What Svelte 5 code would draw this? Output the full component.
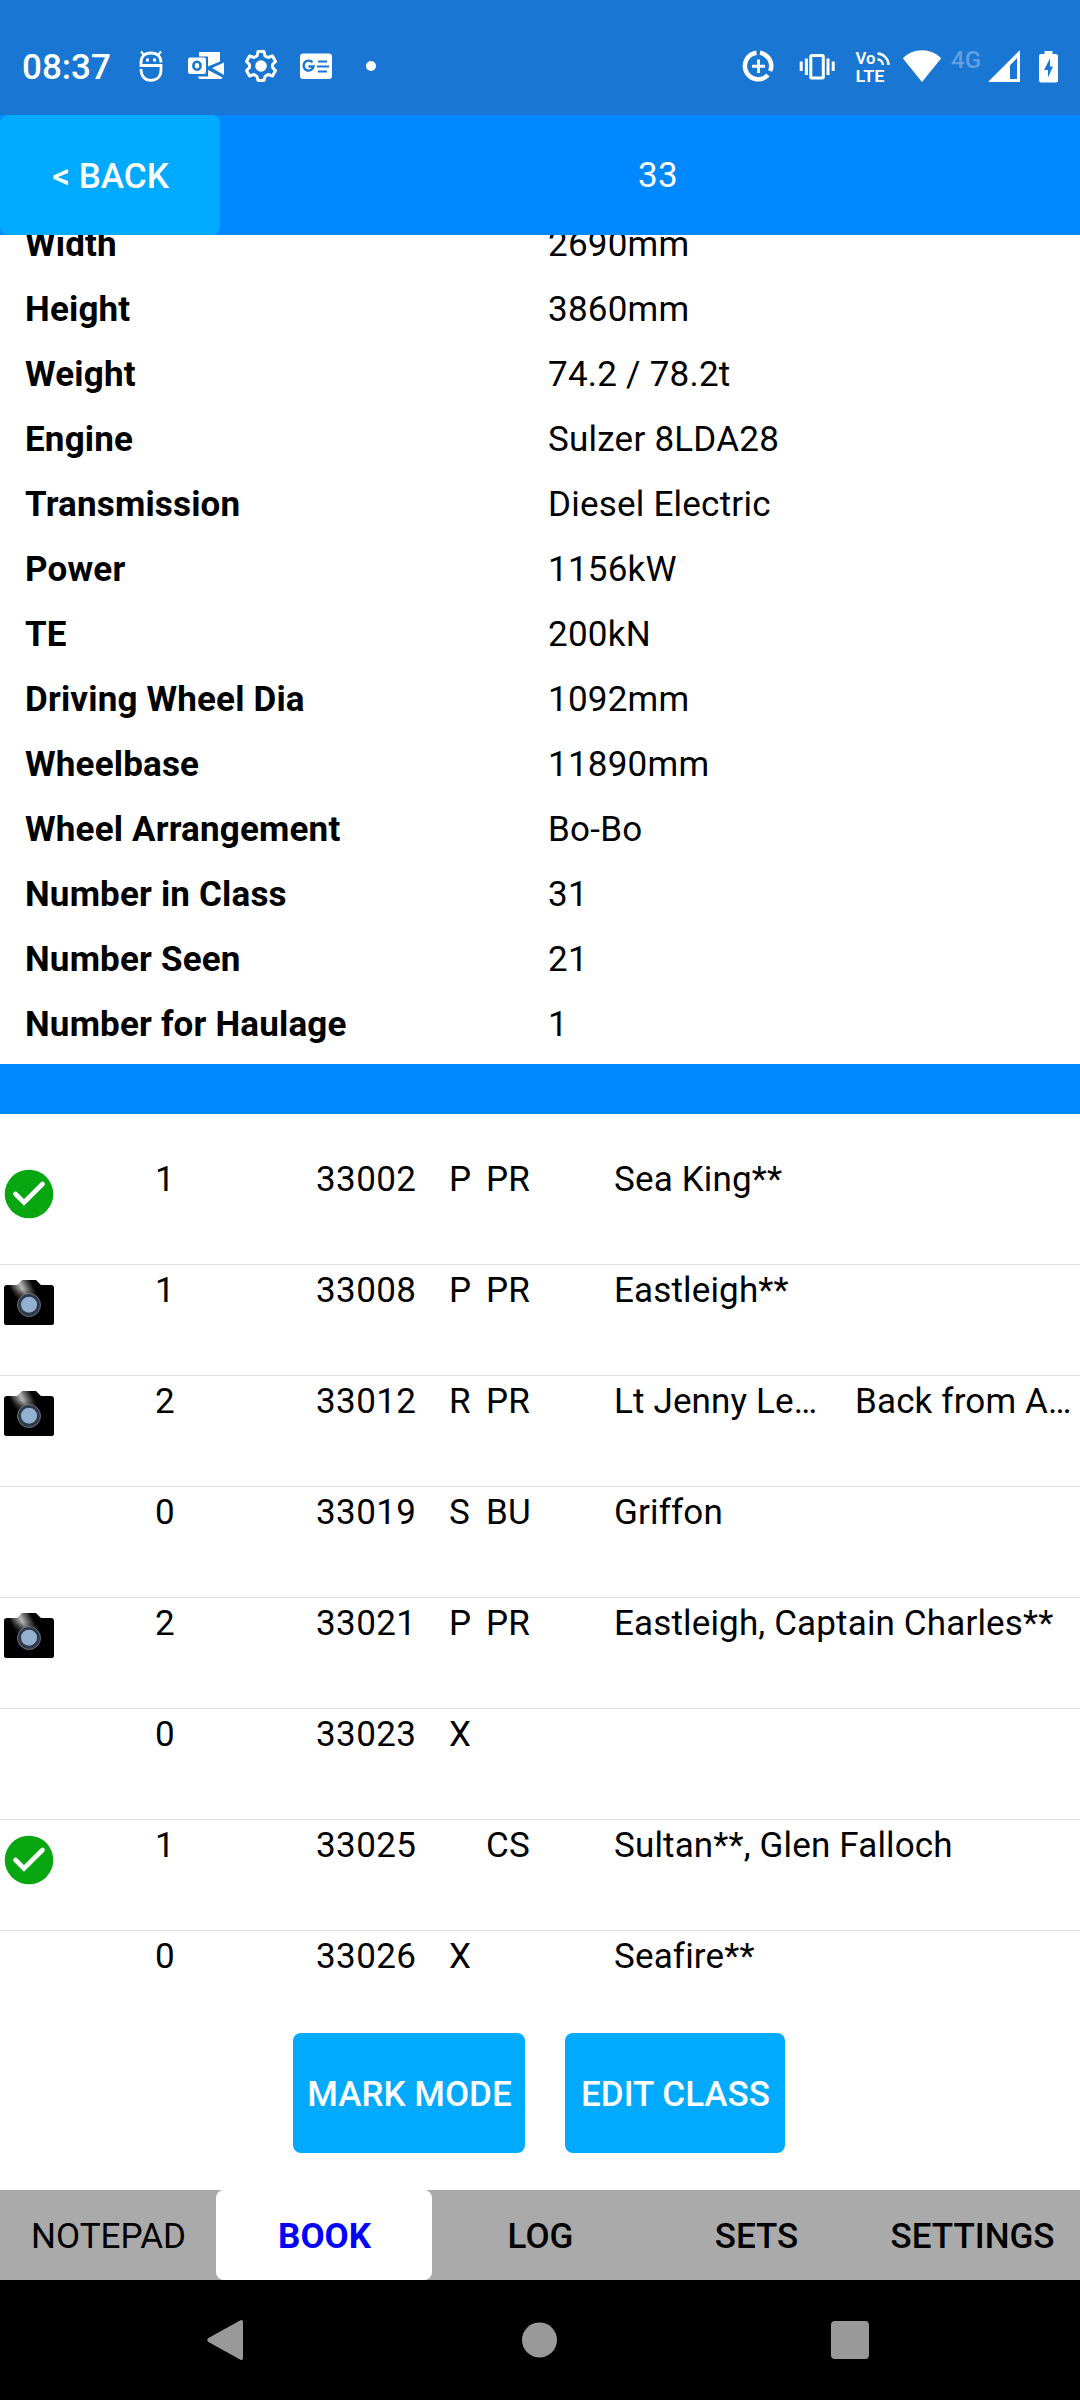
<script lang="ts">
  type Loco = {
    icon?: 'tick' | 'camera';
    count: number;
    number: string;
    status?: string;
    pool?: string;
    name?: string;
    note?: string;
  };

  const details: [string, string][] = [
    ['Width', '2690mm'],
    ['Height', '3860mm'],
    ['Weight', '74.2 / 78.2t'],
    ['Engine', 'Sulzer 8LDA28'],
    ['Transmission', 'Diesel Electric'],
    ['Power', '1156kW'],
    ['TE', '200kN'],
    ['Driving Wheel Dia', '1092mm'],
    ['Wheelbase', '11890mm'],
    ['Wheel Arrangement', 'Bo-Bo'],
    ['Number in Class', '31'],
    ['Number Seen', '21'],
    ['Number for Haulage', '1']
  ];

  const locos: Loco[] = [
    { icon: 'tick', count: 1, number: '33002', status: 'P', pool: 'PR', name: 'Sea King**' },
    { icon: 'camera', count: 1, number: '33008', status: 'P', pool: 'PR', name: 'Eastleigh**' },
    { icon: 'camera', count: 2, number: '33012', status: 'R', pool: 'PR', name: 'Lt Jenny Le…', note: 'Back from A…' },
    { count: 0, number: '33019', status: 'S', pool: 'BU', name: 'Griffon' },
    { icon: 'camera', count: 2, number: '33021', status: 'P', pool: 'PR', name: 'Eastleigh, Captain Charles**' },
    { count: 0, number: '33023', status: 'X' },
    { icon: 'tick', count: 1, number: '33025', pool: 'CS', name: 'Sultan**, Glen Falloch' },
    { count: 0, number: '33026', status: 'X', name: 'Seafire**' }
  ];

  const tabs = ['NOTEPAD', 'BOOK', 'LOG', 'SETS', 'SETTINGS'];
  let activeTab = $state('BOOK');
</script>

<div class="screen">
  <div class="status-bar">
    <span class="time">08:37</span>
    <div class="notifications">
      <svg width="36" height="36" viewBox="0 0 36 36" fill="none" stroke="#fff" stroke-width="2.800">
        <path d="M28 14.500C28 8.500 24 5 18 5S8 8.500 8 14.500V17.500H28V22C28 28.500 24 32.300 18 32.300S8 28.500 8 21" />
        <path d="M8 3.500l3 3.500M28 3.500l-3 3.500" stroke-width="2.200" />
        <path d="M13 12h3M20 12h3" />
      </svg>
      <svg width="36" height="36" viewBox="0 0 36 36">
        <path fill="#fff" d="M11 4H32V13.500L20 18.500V8.500H11zM36 14.500V27L24 20zM20 22L34.500 29.500Q34 31 32 31H12Q10.500 31 10 28.500H20z" />
        <path fill="#fff" fill-rule="evenodd" d="M2 9.500H16Q18 9.500 18 11.500V24Q18 26 16 26H2Q0 26 0 24V11.500Q0 9.500 2 9.500zM9 12.500C2.500 12.500 2.500 23 9 23S15.500 12.500 9 12.500zM9 15C12 15 12 20.500 9 20.500S6 15 9 15z" />
      </svg>
      <svg width="36" height="36" viewBox="0 0 36 36">
        <path fill="none" stroke="#fff" stroke-width="3" stroke-linejoin="round" d="M15 3.500H21L22 8L25 9.500L29.500 8L32.500 13.500L29.500 16.500V19.500L32.500 22.500L29.500 28L25 26.500L22 28.500L21 32.500H15L14 28.500L11 26.500L6.500 28L3.500 22.500L6.500 19.500V16.500L3.500 13.500L6.500 8L11 9.500L14 8z" />
        <circle cx="18" cy="18" r="5.800" fill="#fff" />
      </svg>
      <svg width="36" height="36" viewBox="0 0 36 36" fill="none" stroke="#1976d2">
        <rect x="2" y="5.500" width="32" height="25.500" rx="3" fill="#fff" stroke="none" />
        <path stroke-width="2.400" d="M14.500 14.500A5 5 0 1 0 15.500 18.500H10.500" />
        <path stroke-width="2" d="M20 13.500H29M19 18.500H31M20 23.500H29" />
      </svg>
      <svg width="36" height="36" viewBox="0 0 36 36">
        <circle cx="18" cy="18" r="5" fill="#fff" />
      </svg>
    </div>
    <div class="system">
      <svg width="36" height="36" viewBox="0 0 36 36" fill="none" stroke="#fff">
        <path stroke-width="4.500" d="M20 4.800A13.300 13.300 0 0 1 30.200 23M28 27A13.300 13.300 0 1 1 16.500 4.800" />
        <path stroke-width="3" d="M18.500 11.500V25M12 18.200H25" />
      </svg>
      <svg class="vibrate" width="36" height="36" viewBox="0 0 36 36" fill="none" stroke="#fff">
        <rect x="11.800" y="7.500" width="12.500" height="22.500" rx="1" stroke-width="3" />
        <path stroke-width="3" d="M2.200 13.500V23M7.400 10.500V27M29 10.500V27M34.200 13.500V23" />
      </svg>
      <svg class="volte" width="36" height="36" viewBox="0 0 36 36">
        <text x="0.500" y="16.300" textLength="20" lengthAdjust="spacingAndGlyphs">Vo</text>
        <text x="0.500" y="34" textLength="29" lengthAdjust="spacingAndGlyphs">LTE</text>
        <path fill="none" stroke="#fff" stroke-width="2.400" d="M22.500 11.300A6 6 0 0 1 28 17M22.500 5.500A11.500 11.500 0 0 1 33.500 17" />
      </svg>
      <svg class="wifi" width="40" height="36" viewBox="0 0 40 36">
        <path fill="#fff" d="M20 34L0.800 10.300C6 5 12.500 2.200 20 2.200S34 5 39.200 10.300z" />
      </svg>
      <span class="network">4G</span>
      <svg width="32" height="36" viewBox="0 0 32 36">
        <path fill="#fff" fill-rule="evenodd" d="M32 2V34H0zM29 10L22 17.500V31H29z" />
      </svg>
      <svg class="battery" width="19" height="36" viewBox="0 0 19 36">
        <path fill="#fff" fill-rule="evenodd" d="M5.500 3H13.500V6H17Q19 6 19 8V32.500Q19 34.500 17 34.500H2Q0 34.500 0 32.500V8Q0 6 2 6H5.500zM11 10.500L5 22H9V29.500L14 18.500H11z" />
      </svg>
    </div>
  </div>

  <header>
    <button class="back">&lt; BACK</button>
    <h1>33</h1>
  </header>

  <div class="details">
    {#each details as [label, value]}
      <div class="detail">
        <b>{label}</b>
        <span>{value}</span>
      </div>
    {/each}
  </div>

  <div class="band"></div>

  <div class="locos">
    {#each locos as loco}
      <div class="loco">
        <div class="icon">
          {#if loco.icon === 'tick'}
            <svg width="50" height="50" viewBox="0 0 50 50">
              <circle cx="25" cy="25" r="24.300" fill="#08a611" />
              <path d="M11.500 25L20 33.500L38.500 15" fill="none" stroke="#fff" stroke-width="4.600" stroke-linecap="round" />
            </svg>
          {:else if loco.icon === 'camera'}
            <svg width="50" height="50" viewBox="0 0 50 50">
              <defs>
                <linearGradient id="shine" gradientUnits="userSpaceOnUse" x1="8" y1="13" x2="28" y2="3">
                  <stop offset="0" stop-color="#000" />
                  <stop offset="0.500" stop-color="#b8b8b8" />
                  <stop offset="1" stop-color="#000" />
                </linearGradient>
                <linearGradient id="fade" x1="0" y1="0" x2="0" y2="1">
                  <stop offset="0.200" stop-color="#000" stop-opacity="0" />
                  <stop offset="0.500" stop-color="#000" />
                </linearGradient>
              </defs>
              <path fill="url(#shine)" d="M3 5H13L18 0H32L37 5H47Q50 5 50 8V42Q50 45 47 45H3Q0 45 0 42V8Q0 5 3 5z" />
              <path fill="url(#fade)" d="M3 5H13L18 0H32L37 5H47Q50 5 50 8V42Q50 45 47 45H3Q0 45 0 42V8Q0 5 3 5z" />
              <circle cx="25" cy="25" r="11.500" fill="#2c3a4a" stroke="#8a8f96" stroke-width="0.700" />
              <circle cx="25" cy="24.700" r="8" fill="#95afcf" />
            </svg>
          {/if}
        </div>
        <span class="count">{loco.count}</span>
        <span class="number">{loco.number}</span>
        <span class="status">{loco.status ?? ''}</span>
        <span class="pool">{loco.pool ?? ''}</span>
        <span class="name">{loco.name ?? ''}</span>
        {#if loco.note}
          <span class="note">{loco.note}</span>
        {/if}
      </div>
    {/each}
  </div>

  <div class="actions">
    <button class="mark">MARK MODE</button>
    <button class="edit">EDIT CLASS</button>
  </div>

  <div class="tabs">
    {#each tabs as tab, i}
      <button class:active={tab === activeTab} class:plain={i === 0} onclick={() => (activeTab = tab)}>{tab}</button>
    {/each}
  </div>

  <div class="nav-bar">
    <svg width="40" height="44" viewBox="0 0 40 44">
      <path fill="#999" d="M2.500 20L34 2.500Q37 1 37 4V40Q37 43 34 41.500L2.500 24Q0 22 2.500 20z" />
    </svg>
    <svg width="36" height="36" viewBox="0 0 36 36">
      <circle cx="18.500" cy="18" r="17.500" fill="#999" />
    </svg>
    <svg width="38" height="38" viewBox="0 0 38 38">
      <rect width="38" height="38" rx="4" fill="#999" />
    </svg>
  </div>
</div>

<style>
  :global(body) {
    margin: 0;
    background: #fff;
  }
  .screen {
    width: 1080px;
    height: 2400px;
    display: flex;
    flex-direction: column;
    overflow: hidden;
    background: #fff;
    color: #000;
    font-family: Roboto, sans-serif;
    font-size: 35px;
    letter-spacing: 0.15px;
  }
  .screen > div,
  header {
    flex-shrink: 0;
  }
  svg {
    display: block;
    flex-shrink: 0;
    overflow: visible;
  }
  button {
    box-sizing: border-box;
    border: 0;
    padding: 2px 0 0 1px;
    font: inherit;
    font-weight: 500;
    letter-spacing: 0;
    cursor: pointer;
  }

  .status-bar {
    height: 115px;
    box-sizing: border-box;
    padding: 17px 22px 0 22px;
    display: flex;
    align-items: center;
    background: #1976d2;
    color: #fff;
  }
  .time {
    width: 111px;
    font-size: 35px;
    font-weight: 500;
    letter-spacing: 0;
    line-height: 40px;
    padding-top: 4px;
  }
  .notifications {
    display: flex;
    gap: 19px;
  }
  .system {
    display: flex;
    margin-left: auto;
  }
  .vibrate {
    margin-left: 23px;
  }
  .volte {
    margin-left: 20px;
  }
  .volte text {
    fill: #fff;
    font-size: 17px;
    font-weight: 600;
    letter-spacing: 0;
  }
  .wifi {
    margin-left: 11px;
  }
  .network {
    width: 37px;
    margin-left: 9px;
    font-size: 24px;
    font-weight: 500;
    line-height: 24px;
    letter-spacing: 0;
    color: #619fe0;
  }
  .battery {
    margin-left: 19px;
  }

  header {
    height: 120px;
    display: flex;
    background: #08f;
    color: #fff;
  }
  .back {
    width: 220px;
    border-radius: 8px;
    background: #0af;
    color: #fff;
  }
  h1 {
    flex: 1;
    margin: 0;
    padding-left: 16px;
    font-size: 35px;
    font-weight: 400;
    line-height: 121px;
    letter-spacing: 0.35px;
    text-align: center;
  }

  .details {
    height: 829px;
    box-sizing: border-box;
    padding-bottom: 7px;
    display: flex;
    flex-direction: column;
    justify-content: flex-end;
    overflow: hidden;
  }
  .detail {
    height: 65px;
    flex-shrink: 0;
    display: flex;
    padding-left: 25px;
    line-height: 65px;
    letter-spacing: 0.23px;
  }
  .detail b {
    width: 523px;
    font-weight: 700;
    letter-spacing: 0.17px;
  }

  .band {
    height: 50px;
    background: #08f;
  }

  .locos {
    height: 919px;
    box-sizing: border-box;
    padding-top: 40px;
    overflow: hidden;
  }
  .loco {
    height: 110px;
    display: flex;
    border-bottom: 1px solid #e0e0e0;
    line-height: 52px;
    white-space: nowrap;
  }
  .loco:last-child {
    border-bottom: 0;
  }
  .icon {
    width: 151px;
    padding: 15px 0 0 4px;
  }
  .count {
    width: 161px;
  }
  .number {
    width: 133px;
    letter-spacing: 0.4px;
  }
  .status {
    width: 37px;
  }
  .pool {
    width: 128px;
  }
  .name {
    min-width: 241px;
  }

  .actions {
    height: 157px;
    display: flex;
    gap: 40px;
    padding-left: 293px;
  }
  .actions button {
    height: 120px;
    border-radius: 8px;
    background: #0af;
    color: #fff;
  }
  .mark {
    width: 232px;
  }
  .edit {
    width: 220px;
  }

  .tabs {
    height: 90px;
    display: flex;
    background: #aaa;
  }
  .tabs button {
    flex: 1;
    border-radius: 8px;
    background: #aaa;
    color: #000;
  }
  .tabs .plain {
    font-weight: 400;
  }
  .tabs .active {
    background: #fff;
    color: #00f;
    font-weight: 700;
  }

  .nav-bar {
    height: 120px;
    box-sizing: border-box;
    padding: 0 211px 0 206px;
    display: flex;
    align-items: center;
    justify-content: space-between;
    background: #000;
  }
</style>
